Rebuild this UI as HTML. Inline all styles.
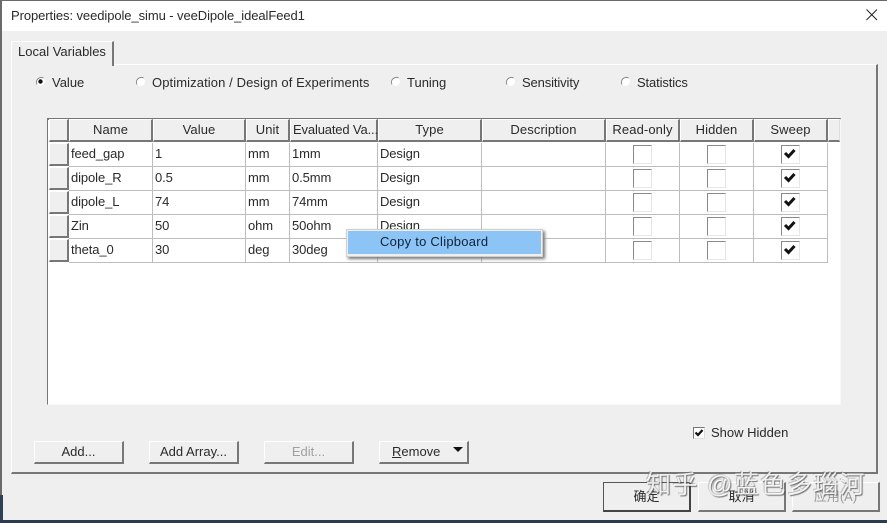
<!DOCTYPE html>
<html><head><meta charset="utf-8">
<style>
html,body{margin:0;padding:0;width:887px;height:523px;overflow:hidden;background:#efefef}
*{box-sizing:border-box}
body{position:relative;font-family:"Liberation Sans","Noto Sans CJK SC",sans-serif;font-size:13px;color:#2a2a2a;letter-spacing:0}
div,span.a{position:absolute}
.t{white-space:nowrap;line-height:16px}
.g{letter-spacing:-.1px}
.hd{top:119px;height:23px;background:#efefef;border-top:1px solid #fff;border-left:1px solid #fff;border-right:2px solid #777;border-bottom:2px solid #777;line-height:20px;text-align:center;white-space:nowrap;letter-spacing:.1px}
.rh{left:49px;width:20px;height:23px;background:#efefef;border-top:1px solid #fff;border-left:1px solid #fff;border-right:2px solid #777;border-bottom:2px solid #777}
.hl{left:69px;width:759px;height:1px;background:#bdbdbd}
.vl{top:143px;width:1px;height:120px;background:#bdbdbd}
.cb{width:19px;height:19px;background:#fff;border-top:1px solid #8a8a8a;border-left:1px solid #8a8a8a;border-right:1px solid #e6e6e6;border-bottom:1px solid #e6e6e6}
.btn{height:23px;width:90px;top:441px;background:#efefef;border-top:1px solid #fff;border-left:1px solid #fff;border-right:2px solid #777;border-bottom:2px solid #777;text-align:center;line-height:20px;white-space:nowrap}
.btn2{top:482px;height:30px;width:88px;background:#efefef;border-top:1px solid #fff;border-left:1px solid #fff;border-right:2px solid #777;border-bottom:2px solid #777;text-align:center;line-height:27px;white-space:nowrap;font-size:13px;letter-spacing:0}
svg{position:absolute;overflow:visible}
</style></head>
<body>
<div style="left:0;top:0;width:887px;height:1px;background:#6a6a6a"></div>
<div style="left:0;top:0;width:2px;height:495px;background:#6a6a6a"></div>
<div style="left:0;top:495px;width:3px;height:28px;background:#2f4057"></div>
<div style="left:0;top:520px;width:887px;height:3px;background:#2c3b50"></div>
<div style="left:2px;top:1px;width:885px;height:30px;background:#fff"></div>
<div class="t" style="left:11px;top:8px;letter-spacing:-.08px">Properties: veedipole_simu - veeDipole_idealFeed1</div>
<svg style="left:866px;top:9px" width="12" height="12"><path d="M.5.5 11 11M11 .5.5 11" stroke="#222" stroke-width="1" fill="none"/></svg>

<!-- tab panel -->
<div style="left:11px;top:64px;width:867px;height:410px;border-top:1px solid #fff;border-left:1px solid #fff;border-right:2px solid #777;border-bottom:2px solid #777;background:#efefef"></div>
<div style="left:11px;top:41px;width:103px;height:25px;background:#efefef;border-top:1px solid #fff;border-left:1px solid #fff;border-right:2px solid #777"></div>
<div class="t" style="left:18px;top:44px">Local Variables</div>

<!-- radios -->
<svg style="left:35px;top:76px" width="12" height="12"><circle cx="5.5" cy="5.5" r="4.5" fill="#fff"/><path d="M2 8.5A4.8 4.8 0 0 1 8.5 2" stroke="#888" fill="none"/><circle cx="5.5" cy="5.5" r="2.2" fill="#111"/></svg>
<div class="t" style="left:52px;top:75px">Value</div>
<svg style="left:135px;top:76px" width="12" height="12"><circle cx="5.5" cy="5.5" r="4.5" fill="#fff"/><path d="M2 8.5A4.8 4.8 0 0 1 8.5 2" stroke="#888" fill="none"/></svg>
<div class="t" style="left:152px;top:75px;letter-spacing:.1px">Optimization / Design of Experiments</div>
<svg style="left:390px;top:76px" width="12" height="12"><circle cx="5.5" cy="5.5" r="4.5" fill="#fff"/><path d="M2 8.5A4.8 4.8 0 0 1 8.5 2" stroke="#888" fill="none"/></svg>
<div class="t" style="left:407px;top:75px">Tuning</div>
<svg style="left:505px;top:76px" width="12" height="12"><circle cx="5.5" cy="5.5" r="4.5" fill="#fff"/><path d="M2 8.5A4.8 4.8 0 0 1 8.5 2" stroke="#888" fill="none"/></svg>
<div class="t" style="left:522px;top:75px;letter-spacing:-.12px">Sensitivity</div>
<svg style="left:620px;top:76px" width="12" height="12"><circle cx="5.5" cy="5.5" r="4.5" fill="#fff"/><path d="M2 8.5A4.8 4.8 0 0 1 8.5 2" stroke="#888" fill="none"/></svg>
<div class="t" style="left:637px;top:75px;letter-spacing:-.12px">Statistics</div>

<!-- grid -->
<div style="left:47px;top:118px;width:794px;height:287px;background:#fff;border-top:2px solid #777;border-left:1px solid #777;border-right:1px solid #f8f8f8;border-bottom:1px solid #f8f8f8"></div>
<div class="hd" style="left:49px;width:20px"></div>
<div class="hd" style="left:69px;width:84px">Name</div>
<div class="hd" style="left:153px;width:93px">Value</div>
<div class="hd" style="left:246px;width:44px">Unit</div>
<div class="hd" style="left:290px;width:88px;letter-spacing:-.15px;text-align:left;padding-left:2px">Evaluated Va...</div>
<div class="hd" style="left:378px;width:104px">Type</div>
<div class="hd" style="left:482px;width:124px">Description</div>
<div class="hd" style="left:606px;width:74px">Read-only</div>
<div class="hd" style="left:680px;width:74px">Hidden</div>
<div class="hd" style="left:754px;width:74px">Sweep</div>
<div class="hd" style="left:828px;width:12px;border-right:1px solid #ddd;border-bottom:2px solid #777"></div>

<div class="rh" style="top:143px"></div><div class="rh" style="top:167px"></div><div class="rh" style="top:191px"></div><div class="rh" style="top:215px"></div><div class="rh" style="top:239px"></div>
<div class="hl" style="top:166px"></div><div class="hl" style="top:190px"></div><div class="hl" style="top:214px"></div><div class="hl" style="top:238px"></div><div class="hl" style="top:262px"></div>
<div class="vl" style="left:152px"></div><div class="vl" style="left:245px"></div><div class="vl" style="left:289px"></div><div class="vl" style="left:377px"></div><div class="vl" style="left:481px"></div><div class="vl" style="left:605px"></div><div class="vl" style="left:679px"></div><div class="vl" style="left:753px"></div><div class="vl" style="left:827px"></div>

<div class="t g" style="left:71px;top:146px">feed_gap</div><div class="t g" style="left:155px;top:146px">1</div><div class="t g" style="left:248px;top:146px">mm</div><div class="t g" style="left:292px;top:146px">1mm</div><div class="t g" style="left:380px;top:146px">Design</div>
<div class="t g" style="left:71px;top:170px">dipole_R</div><div class="t g" style="left:155px;top:170px">0.5</div><div class="t g" style="left:248px;top:170px">mm</div><div class="t g" style="left:292px;top:170px">0.5mm</div><div class="t g" style="left:380px;top:170px">Design</div>
<div class="t g" style="left:71px;top:194px">dipole_L</div><div class="t g" style="left:155px;top:194px">74</div><div class="t g" style="left:248px;top:194px">mm</div><div class="t g" style="left:292px;top:194px">74mm</div><div class="t g" style="left:380px;top:194px">Design</div>
<div class="t g" style="left:71px;top:218px">Zin</div><div class="t g" style="left:155px;top:218px">50</div><div class="t g" style="left:248px;top:218px">ohm</div><div class="t g" style="left:292px;top:218px">50ohm</div><div class="t g" style="left:380px;top:218px">Design</div>
<div class="t g" style="left:71px;top:242px">theta_0</div><div class="t g" style="left:155px;top:242px">30</div><div class="t g" style="left:248px;top:242px">deg</div><div class="t g" style="left:292px;top:242px">30deg</div><div class="t g" style="left:380px;top:242px">Design</div>

<div class="cb" style="left:633px;top:145px"></div><div class="cb" style="left:707px;top:145px"></div>
<div class="cb" style="left:633px;top:169px"></div><div class="cb" style="left:707px;top:169px"></div>
<div class="cb" style="left:633px;top:193px"></div><div class="cb" style="left:707px;top:193px"></div>
<div class="cb" style="left:633px;top:217px"></div><div class="cb" style="left:707px;top:217px"></div>
<div class="cb" style="left:633px;top:241px"></div><div class="cb" style="left:707px;top:241px"></div>
<div class="cb" style="left:781px;top:145px"></div><div class="cb" style="left:781px;top:169px"></div><div class="cb" style="left:781px;top:193px"></div><div class="cb" style="left:781px;top:217px"></div><div class="cb" style="left:781px;top:241px"></div>
<svg style="left:781px;top:145px" width="19" height="120"><g fill="none" stroke="#111" stroke-width="3"><path d="M4 8 7.5 11.5 13.5 5"/><path d="M4 32 7.5 35.5 13.5 29"/><path d="M4 56 7.5 59.5 13.5 53"/><path d="M4 80 7.5 83.5 13.5 77"/><path d="M4 104 7.5 107.5 13.5 101"/></g></svg>

<!-- context menu -->
<div style="left:346px;top:229px;width:197px;height:28px;background:#efefef;border:1px solid #cfcfcf;box-shadow:2px 2px 3px #777"></div>
<div style="left:348px;top:231px;width:193px;height:23px;background:#8cc4f6"></div>
<div class="t" style="left:380px;top:234px;color:#10223a;letter-spacing:.25px">Copy to Clipboard</div>

<!-- buttons -->
<div class="btn" style="left:34px">Add...</div>
<div class="btn" style="left:149px">Add Array...</div>
<div class="btn" style="left:264px;color:#a0a0a0">Edit...</div>
<div class="btn" style="left:379px;text-align:left;padding-left:12px"><u>R</u>emove</div>
<svg style="left:453px;top:447px" width="10" height="6"><path d="M0 0H10L5 5Z" fill="#111"/></svg>

<!-- show hidden -->
<div style="left:693px;top:427px;width:12px;height:12px;background:#fff;border-top:1px solid #777;border-left:1px solid #777;border-right:1px solid #ddd;border-bottom:1px solid #ddd"></div>
<svg style="left:693px;top:427px" width="12" height="12"><path d="M2.5 5.5 5 8 9.5 3" fill="none" stroke="#111" stroke-width="2.2"/></svg>
<div class="t" style="left:711px;top:425px">Show Hidden</div>

<!-- bottom buttons -->
<div class="btn2" style="left:603px;border-top:1px solid #555;border-left:1px solid #555;border-right:2px solid #444;border-bottom:2px solid #444">确定</div>
<div class="btn2" style="left:698px">取消</div>
<div class="btn2" style="left:792px;color:#999">应用(A)</div>

<!-- watermark -->
<div class="t" style="left:646px;top:470px;line-height:30px;font-size:25px;letter-spacing:1.4px;color:rgba(255,255,255,.85);text-shadow:1px 1px 1px rgba(70,70,70,.75),-1px -1px 0 rgba(110,110,110,.35)">知乎 @蓝色多瑙河</div>
</body></html>
